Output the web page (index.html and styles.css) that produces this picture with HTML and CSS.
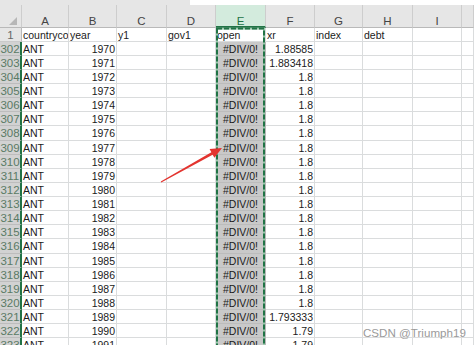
FILE: index.html
```html
<!DOCTYPE html>
<html lang="en">
<head>
  <meta charset="UTF-8">
  <title>Sheet1</title>
  <link rel="stylesheet" href="styles.css">
</head>
<body>

<div class="sheet">
  <div class="topstrip">
    <div class="topstrip-left"></div>
    <div class="topstrip-right"></div>
  </div>
  <div class="grid" id="grid"></div>

  <svg class="overlay" width="474" height="345" viewBox="0 0 474 345">
    <!-- copy marquee round column E -->
    <rect x="217" y="28.6" width="47" height="400" fill="none" stroke="#9cc9ad" stroke-width="2" />
    <rect x="217" y="28.6" width="47" height="400" fill="none" stroke="#217346" stroke-width="2" stroke-dasharray="5 2" />
    <!-- red pointer -->
    <polygon fill="#e3342f" points="160.76,181.56 211.37,152.37 209.57,149.07 222,148 214.43,157.87 212.63,154.63 161.24,182.44" />
  </svg>

  <div class="watermark">CSDN @Triumph19</div>
</div>

<script>
  const grid = document.getElementById("grid");

  function cell(text, cls) {
    const d = document.createElement("div");
    d.className = "cell" + (cls ? " " + cls : "");
    d.textContent = text;
    grid.appendChild(d);
  }

  // column letters
  cell("", "corner");
  ["A", "B", "C", "D", "E", "F", "G", "H", "I", ""].forEach(function (c) {
    cell(c, c === "E" ? "colhead picked" : "colhead");
  });

  // header row of the data
  cell("1", "rowhead");
  ["countrycode", "year", "y1", "gov1", "open", "xr", "index", "debt", "", ""].forEach(function (t) {
    cell(t);
  });

  // ANT rows, xr is 1.8 unless listed
  const xr = { 302: "1.88585", 303: "1.883418", 321: "1.793333", 322: "1.79", 323: "1.79" };
  for (let r = 302; r <= 323; r++) {
    cell(r, "rowhead picked");
    cell("ANT");
    cell(1668 + r, "num");
    cell("");
    cell("");
    cell("#DIV/0!", "err");
    cell(xr[r] || "1.8", "num");
    cell("");
    cell("");
    cell("");
    cell("");
  }
</script>

</body>
</html>
```

FILE: styles.css
```css
body {
  margin: 0;
  background: #fff;
  font-family: "Liberation Sans", Arial, sans-serif;
  overflow: hidden;
}

.sheet {
  position: relative;
  width: 474px;
  height: 345px;
  overflow: hidden;
}

.topstrip {
  display: flex;
  height: 5px;
}
.topstrip-left {
  width: 190px;
  background: #e6e6e6;
}
.topstrip-right {
  flex: 1;
  background: #fff;
}

.grid {
  display: grid;
  grid-template-columns: 22px 47px 48px 50px 49px 50px 49px 48px 50px 49px 1fr;
  grid-template-rows: 22.6px;
  grid-auto-rows: 14.125px;
}

.cell {
  box-sizing: border-box;
  border-right: 1px solid #dadcdd;
  border-bottom: 1px solid #dadcdd;
  font-size: 10.5px;
  line-height: 13px;
  padding: 1px 1px 0;
  white-space: nowrap;
  overflow: hidden;
  color: #1a1a1a;
}
.num {
  text-align: right;
}
.err {
  text-align: center;
  background: #c9c9c9;
  border-right-color: #b8b8b8;
  border-bottom-color: #bcbcbc;
}

.corner {
  position: relative;
  background: #e6e6e6;
  border-right-color: #cdcdcd;
  border-bottom-color: #b9b9b9;
}
.corner::after {
  content: "";
  position: absolute;
  right: 4px;
  bottom: 2px;
  width: 0;
  height: 0;
  border-left: 8px solid transparent;
  border-bottom: 8px solid #b7b7b7;
}

.colhead {
  background: #e6e6e6;
  border-right-color: #cdcdcd;
  border-bottom-color: #b9b9b9;
  color: #444;
  text-align: center;
  font-size: 11.5px;
  padding-top: 9.5px;
}
.colhead.picked {
  background: #d3ebdd;
  color: #217346;
  border-bottom: 2px solid #217346;
}

.rowhead {
  background: #e6e6e6;
  color: #666;
  text-align: center;
  font-size: 11.5px;
  padding: 1px 0 0;
  border-right-color: #b9b9b9;
  border-bottom-color: #cacaca;
}
.rowhead.picked {
  background: #d2d2d2;
  color: #5a7a65;
  border-right: 2px solid #217346;
  border-bottom-color: #bdbdbd;
}

.overlay {
  position: absolute;
  left: 0;
  top: 0;
  pointer-events: none;
}

.watermark {
  position: absolute;
  left: 363px;
  top: 326px;
  font-size: 11.6px;
  white-space: nowrap;
  color: #9a9a9a;
}
```
